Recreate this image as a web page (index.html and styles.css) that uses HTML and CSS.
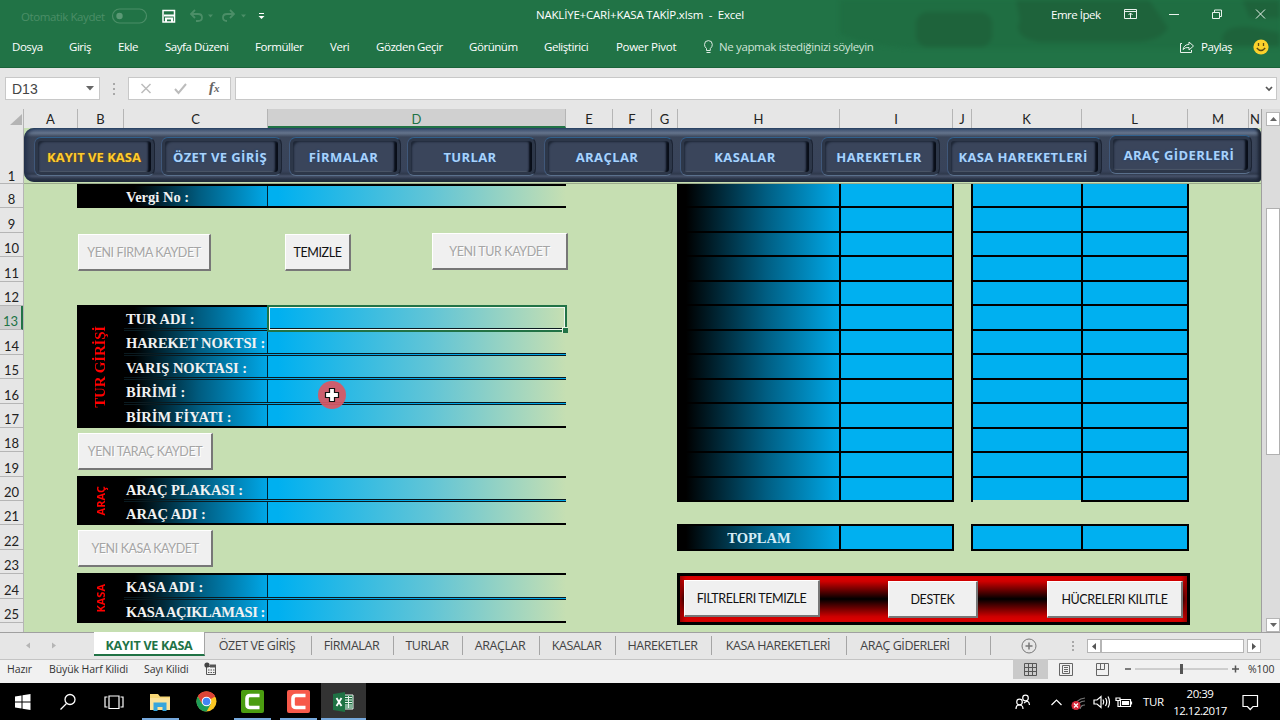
FILE: index.html
```html
<!DOCTYPE html>
<html lang="tr">
<head>
	<meta charset="utf-8">
	<title>NAKLİYE+CARİ+KASA TAKİP.xlsm - Excel</title>
	<link rel="stylesheet" href="styles.css">
</head>
<body>

<!-- Title bar + ribbon tabs -->
<header class="top">
	<svg class="clouds" width="440" height="67" viewBox="840 0 440 67">
		<path d="M836-6h450v54H912Q850 44 836 30Z" fill="#1f6e42"/>
		<rect x="916" y="12" width="76" height="35" rx="12" fill="#1e633b"/>
		<path d="M1015-6H1145L1168 28Q1160 42 1130 42H1040Q1012 38 1020 20Z" fill="#1e633b"/>
		<path d="M1222 38Q1225 25 1250 27L1286 34V46H1235Q1222 46 1222 38ZM1240-6h46v24h-36Z" fill="#1e633b"/>
	</svg>
	<div class="titlebar">
		<span class="autosave">Otomatik Kaydet</span>
		<svg class="quick" width="160" height="30" viewBox="110 0 160 30" fill="none">
			<rect x="112.500" y="9" width="34" height="14" rx="7" stroke="#4b8e67" stroke-width="1.200"/>
			<circle cx="119.500" cy="16" r="3.200" fill="#5b9975"/>
			<path d="M163 10.500h11.500v11.500H163z" stroke="#fff" stroke-width="1.500"/>
			<path d="M164 15.500h10M166 22v-3.500h6V22" stroke="#fff" stroke-width="2"/>
			<path d="M195 10l-4 4 4 4M191 14h7q4 0 4 3.500t-4 3.500h-2" stroke="#4b8e67" stroke-width="1.800"/>
			<path d="M230 10l4 4-4 4M234 14h-7q-4 0-4 3.500t4 3.500" stroke="#4b8e67" stroke-width="1.800"/>
			<path d="M208 14.500h5l-2.500 3zM241 14.500h5l-2.500 3z" fill="#4b8e67"/>
			<path d="M259 13.500h5" stroke="#fff"/><path d="M258.500 16h6l-3 3z" fill="#fff"/>
		</svg>
		<span class="doc-title">NAKLİYE+CARİ+KASA TAKİP.xlsm&nbsp; -&nbsp; Excel</span>
		<span class="user">Emre İpek</span>
		<svg class="winbtns" width="160" height="30" viewBox="1120 0 160 30" fill="none" stroke="#e9f2ec">
			<path d="M1124.500 9.500h12v9h-12zM1124.500 11.500h12M1130.500 18v-5M1128.500 15l2-2 2 2"/>
			<path d="M1169 14.500h10"/>
			<path d="M1212.500 12.500h7v6h-7zM1214.500 12v-2h7v6.500h-2"/>
			<path d="M1256 9.500l9 9M1265 9.500l-9 9"/>
		</svg>
	</div>
	<nav class="ribbon">
		<span class="t-dosya">Dosya</span>
		<span class="t-giris">Giriş</span>
		<span class="t-ekle">Ekle</span>
		<span class="t-sayfa">Sayfa Düzeni</span>
		<span class="t-formul">Formüller</span>
		<span class="t-veri">Veri</span>
		<span class="t-gozden">Gözden Geçir</span>
		<span class="t-gorunum">Görünüm</span>
		<span class="t-gelis">Geliştirici</span>
		<span class="t-pivot">Power Pivot</span>
		<svg width="16" height="18" viewBox="0 0 16 18" fill="none" stroke="#dcebe2"><path d="M3.500 12.500v-2q-2-1.500-2-4a3.800 3.800 0 0 1 7.800 0q0 2.500-2 4v2zM3.500 14.500h4"/></svg>
		<span class="tellme">Ne yapmak istediğinizi söyleyin</span>
		<svg class="share" width="17" height="16" viewBox="0 0 17 16" fill="none" stroke="#e9f2ec"><path d="M3 4.500H1.500v9h11V11M4 10.500q1-5 6-5V3l4.500 4-4.500 4V8.500q-4-.5-6 2z"/></svg>
		<span class="paylas">Paylaş</span>
		<svg width="16" height="16" viewBox="0 0 16 16"><circle cx="8" cy="8" r="7.600" fill="#fbd12c"/><path d="M5.500 4v3M10.500 4v3M3.800 9q4.200 5 8.400 0" stroke="#5d4a12" stroke-width="1.300" fill="none"/></svg>
	</nav>
</header>

<!-- Formula bar -->
<div class="formula">
	<div class="namebox"><span>D13</span><svg width="8" height="5"><path d="M0 0h8L4 4.500z" fill="#666"/></svg></div>
	<svg class="dots" width="4" height="14"><path d="M1 1h2v2H1zM1 6h2v2H1zM1 11h2v2H1z" fill="#a8a8a8"/></svg>
	<div class="fx">
		<svg width="102" height="21" viewBox="129 78 102 21" fill="none" stroke="#bcbcbc" stroke-width="1.500"><path d="M141.500 84l9 9M150.500 84l-9 9"/><path d="M175 89l3.500 4 7.500-9" stroke-width="2"/></svg>
		<span class="fx-f">f<small>x</small></span>
	</div>
	<div class="formula-input"><svg width="8" height="6" fill="none" stroke="#555" stroke-width="1.700"><path d="M1 1l3 3 3-3"/></svg></div>
</div>

<!-- Worksheet -->
<main class="sheet">
	<div class="rowheads">
		<div class="corner"><svg width="12" height="11"><path d="M12 0v11H0z" fill="#b4b4b4"/></svg></div>
		<div class="rh first">1</div>
		<div class="rh">8</div><div class="rh">9</div><div class="rh">10</div><div class="rh">11</div><div class="rh">12</div>
		<div class="rh sel">13</div><div class="rh">14</div><div class="rh">15</div><div class="rh">16</div><div class="rh">17</div>
		<div class="rh">18</div><div class="rh">19</div><div class="rh">20</div><div class="rh">21</div><div class="rh">22</div>
		<div class="rh">23</div><div class="rh">24</div><div class="rh">25</div>
	</div>

	<div class="area">
		<div class="cols colheads">
			<span>A</span><span>B</span><span>C</span><span class="sel">D</span><span>E</span><span>F</span><span>G</span><span>H</span><span>I</span><span>J</span><span>K</span><span>L</span><span>M</span><span>N</span>
		</div>

		<div class="navwrap">
			<div class="navbar">
				<a class="nb n1 on">KAYIT VE KASA</a>
				<a class="nb n2">ÖZET VE GİRİŞ</a>
				<a class="nb n3">FİRMALAR</a>
				<a class="nb n4">TURLAR</a>
				<a class="nb n5">ARAÇLAR</a>
				<a class="nb n6">KASALAR</a>
				<a class="nb n7">HAREKETLER</a>
				<a class="nb n8">KASA HAREKETLERİ</a>
				<a class="nb n9">ARAÇ GİDERLERİ</a>
			</div>
		</div>

		<div class="cols cells">
			<!-- left entry forms -->
			<div class="form f-firma">
				<div class="side"></div>
				<div class="line"><b>Vergi No :</b><i></i></div>
			</div>
			<button class="btn off b-firma">YENI FIRMA KAYDET</button>
			<button class="btn b-temizle">TEMIZLE</button>
			<button class="btn off b-tur">YENI TUR KAYDET</button>

			<div class="form f-tur">
				<div class="side serif"><span>TUR GİRİŞİ</span></div>
				<div class="line"><b>TUR ADI :</b><i class="active"></i></div>
				<div class="line"><b class="tight">HAREKET NOKTSI :</b><i></i></div>
				<div class="line"><b>VARIŞ NOKTASI :</b><i></i></div>
				<div class="line"><b>BİRİMİ :</b><i></i></div>
				<div class="line"><b>BİRİM FİYATI :</b><i></i></div>
			</div>
			<button class="btn off b-tarac">YENI TARAÇ KAYDET</button>

			<div class="form f-arac">
				<div class="side"><span>ARAÇ</span></div>
				<div class="line"><b class="tight">ARAÇ PLAKASI :</b><i></i></div>
				<div class="line"><b>ARAÇ ADI :</b><i></i></div>
			</div>
			<button class="btn off b-kasa">YENI KASA KAYDET</button>

			<div class="form f-kasa">
				<div class="side"><span>KASA</span></div>
				<div class="line"><b>KASA ADI :</b><i></i></div>
				<div class="line"><b class="tighter">KASA AÇIKLAMASI :</b><i></i></div>
			</div>

			<!-- right list -->
			<div class="list l-h"><i></i><i></i><i></i><i></i><i></i><i></i><i></i><i></i><i></i><i></i><i></i><i></i><i></i></div>
			<div class="list l-i"><i></i><i></i><i></i><i></i><i></i><i></i><i></i><i></i><i></i><i></i><i></i><i></i><i></i></div>
			<div class="list l-k"><i></i><i></i><i></i><i></i><i></i><i></i><i></i><i></i><i></i><i></i><i></i><i></i><i></i></div>
			<div class="list l-l"><i></i><i></i><i></i><i></i><i></i><i></i><i></i><i></i><i></i><i></i><i></i><i></i><i></i></div>

			<div class="total t-h">TOPLAM</div>
			<div class="total t-i"></div>
			<div class="total t-k"></div>
			<div class="total t-l"></div>

			<div class="redbox">
				<button class="btn b-filtre">FILTRELERI TEMIZLE</button>
				<button class="btn b-destek">DESTEK</button>
				<button class="btn b-kilit">HÜCRELERI KILITLE</button>
			</div>
		</div>
	</div>

	<div class="vscroll">
		<div class="sb"><svg width="7" height="4"><path d="M0 4h7L3.500 0z" fill="#666"/></svg></div>
		<div class="thumb"></div>
		<div class="sb"><svg width="7" height="4"><path d="M0 0h7L3.500 4z" fill="#666"/></svg></div>
	</div>

	<svg class="pointer" width="30" height="30" viewBox="0 0 30 30"><circle cx="15" cy="15" r="14" fill="#d95763" opacity=".93"/><path d="M12.500 8.500h5v4h4v5h-4v4h-5v-4h-4v-5h4z" fill="#fff" stroke="#111" stroke-width="1.200"/></svg>
</main>

<!-- Sheet tabs -->
<div class="tabs">
	<svg class="arrows" width="94" height="26"><path d="M30 9.500v6l-4-3zM52 9.500v6l4-3z" fill="#b5b5b5"/></svg>
	<span class="s1">KAYIT VE KASA</span>
	<span class="s2">ÖZET VE GİRİŞ</span>
	<span class="s3">FİRMALAR</span>
	<span class="s4">TURLAR</span>
	<span class="s5">ARAÇLAR</span>
	<span class="s6">KASALAR</span>
	<span class="s7">HAREKETLER</span>
	<span class="s8">KASA HAREKETLERİ</span>
	<span class="s9">ARAÇ GİDERLERİ</span>
	<span class="s10"></span>
	<svg class="add" width="16" height="16" fill="none" stroke="#777"><circle cx="8" cy="8" r="7"/><path d="M8 4.500v7M4.500 8h7" stroke-width="1.500"/></svg>
	<svg class="dots" width="4" height="12"><path d="M1 1h2v2H1zM1 5h2v2H1zM1 9h2v2H1z" fill="#a8a8a8"/></svg>
	<div class="hscroll">
		<div class="sb"><svg width="4" height="7"><path d="M4 0v7L0 3.500z" fill="#555"/></svg></div>
		<div class="hthumb"></div>
		<div class="sb right"><svg width="4" height="7"><path d="M0 0v7l4-3.500z" fill="#555"/></svg></div>
	</div>
</div>

<!-- Status bar -->
<div class="status">
	<span class="st1">Hazır</span>
	<span class="st2">Büyük Harf Kilidi</span>
	<span class="st3">Sayı Kilidi</span>
	<svg width="14" height="14" viewBox="0 0 14 14"><path d="M2.500 4.500h9v8h-9z" fill="none" stroke="#555"/><path d="M6 2.500h6v3H6z" fill="#555"/><path d="M4 8h1.500M6.500 8H8M9 8h1.500M4 10.500h1.500M6.500 10.500H8M9 10.500h1.500" stroke="#555"/><circle cx="3" cy="3" r="2.600" fill="#444"/></svg>
	<div class="views">
		<div class="view on"><svg width="13" height="13" fill="none" stroke="#555"><path d="M.5.500h12v12H.5zM4.500.500v12M8.500.500v12M.5 4.500h12M.5 8.500h12"/></svg></div>
		<div class="view"><svg width="14" height="13" fill="none" stroke="#666"><path d="M.5.500h13v12H.5zM3.500 2.500h7v8h-7zM5 4.500h4M5 6.500h4M5 8.500h4"/></svg></div>
		<div class="view"><svg width="13" height="13" fill="none" stroke="#666"><path d="M.5.500h12v12H.5zM4.500.500v6M8.500.500v6M.5 6.500h8"/></svg></div>
	</div>
	<svg class="zoombar" width="120" height="14" viewBox="1122 0 120 14"><path d="M1135 7h93" stroke="#aaa"/><path d="M1125 7h6M1232 7h7M1235.500 3.500v7" stroke="#555" stroke-width="1.500"/><path d="M1180 2h3v10h-3z" fill="#555"/></svg>
	<span class="pct">%100</span>
</div>

<!-- Taskbar -->
<footer class="taskbar">
	<div class="tb"><svg width="16" height="16" fill="#fff"><path d="M0 2.500l6.500-1v6H0zM7.500 1.300L15.500 0v7.500h-8zM0 8.500h6.500v6L0 13.600zM7.500 8.500h8V16l-8-1.200z"/></svg></div>
	<div class="tb"><svg width="18" height="18" fill="none" stroke="#fff" stroke-width="1.300"><circle cx="11" cy="6.500" r="5"/><path d="M7.500 10.500L1.500 16.500"/></svg></div>
	<div class="tb"><svg width="20" height="16" fill="none" stroke="#fff" stroke-width="1.200"><path d="M5 2h10v12.500H5zM3.500 3H1v10h2.500M16.500 3H19v10h-2.500"/></svg></div>
	<div class="tb open"><svg width="20" height="18"><path d="M0 1h8l2 2.500h10V17H0z" fill="#f8d775"/><path d="M0 5h20v12H0z" fill="#fbe29a"/><path d="M3.500 18V9.500h13V18h-4v-4h-5v4z" fill="#37a5dc"/></svg></div>
	<div class="tb"><svg width="21" height="21" viewBox="-10.500 -10.500 21 21"><circle r="10" fill="#fbc723"/><path d="M0 0L-8.700-5A10 10 0 0 1 8.700-5z" fill="#dc4437"/><path d="M0-5h8.700A10 10 0 0 0-8.700-5L-4.300 2.500z" fill="#dc4437"/><path d="M-8.700-5A10 10 0 0 0 0 10L4.300 2.500-4.300 2.500z" fill="#1d9d58"/><circle r="4.800" fill="#fff"/><circle r="3.800" fill="#4285f4"/></svg></div>
	<div class="tb open"><svg width="23" height="23"><rect width="23" height="23" rx="2" fill="#4b9d10"/><path d="M18.500 5.500H9q-3 0-3 3v6q0 3 3 3h9.500" fill="none" stroke="#fff" stroke-width="3.600"/></svg></div>
	<div class="tb open"><svg width="23" height="23"><rect width="23" height="23" rx="2" fill="#f7594a"/><path d="M18.500 5.500H9q-3 0-3 3v6q0 3 3 3h9.500" fill="none" stroke="#fff" stroke-width="3.600"/></svg></div>
	<div class="tb open cur"><svg width="21" height="20"><path d="M11 3h9v14h-9z" fill="#1f7244" stroke="#e8f3ec"/><path d="M12 5.500h7M12 8h7M12 10.500h7M12 13h7M12 15h7M15.500 4v12" stroke="#e8f3ec"/><path d="M0 2l12-2v20L0 18z" fill="#1f7244"/><path d="M3.500 6l5 8M8.500 6l-5 8" stroke="#fff" stroke-width="1.800"/></svg></div>
	<svg class="tray" width="130" height="28" viewBox="1012 687 130 28" fill="none" stroke="#fff" stroke-width="1.200">
		<circle cx="1026.500" cy="697" r="2.800"/><circle cx="1020.500" cy="701" r="2.800"/><path d="M1017 708q0-4 3.500-4t3.500 4M1025 702q5-4 5.500 2"/>
		<path d="M1052.500 704l5-5 5 5"/>
		<path d="M1074 708a13 13 0 0 1 12-11M1077 708a9 9 0 0 1 9-8M1081 708a5 5 0 0 1 5-4" stroke="#777"/>
		<circle cx="1077" cy="704.500" r="4.500" fill="#d5283a" stroke="none"/><path d="M1075 702.500l4 4M1079 702.500l-4 4"/>
		<path d="M1095 699h3l4-3.500v11l-4-3.500h-3zM1104 698.500q1.500 2.500 0 5M1106.500 697q2.500 4 0 8M1109 695.500q3 5.500 0 11"/>
		<path d="M1121.500 698.500h10v7h-10z"/><path d="M1123 700h7v4h-7z" fill="#fff" stroke="none"/><path d="M1132.500 700.500v3M1117 697h4v2.500h-4zM1119 700v5.500h2"/>
	</svg>
	<span class="lang">TUR</span>
	<div class="clock"><span>20:39</span><span class="date">12.12.2017</span></div>
	<svg class="note" width="17" height="17" fill="none" stroke="#fff" stroke-width="1.200"><path d="M1 1.500h14.500v11H11l-2.800 3-2.700-3H1z"/></svg>
</footer>
</body>
</html>
```
FILE: styles.css
```css
*, *::before, *::after {
	box-sizing: border-box;
}
body {
	margin: 0;
	width: 1280px;
	height: 720px;
	overflow: hidden;
	display: flex;
	flex-direction: column;
	background: #e6e6e6;
	font-family: "Open Sans", "Noto Sans", sans-serif;
	font-size: 12px;
	color: #222;
	white-space: nowrap;
}
svg {
	display: block;
	flex: none;
}
span {
	flex: none;
}

/* ---- title bar and ribbon ---- */
.top {
	position: relative;
	height: 68px;
	overflow: hidden;
	background: #217346;
	border-bottom: 1px solid #1a6339;
	color: #fff;
}
.clouds {
	position: absolute;
	right: 0;
	top: 0;
	filter: blur(2px);
}
.titlebar {
	position: relative;
	display: flex;
	align-items: center;
	height: 30px;
	font-size: 11.5px;
	letter-spacing: -0.2px;
}
.titlebar span {
	padding-bottom: 2px;
}
.titlebar .autosave {
	width: 89px;
	margin-left: 21px;
	padding: 3px 0 0;
	color: #4b8e67;
	letter-spacing: -0.4px;
}
.doc-title {
	width: 515px;
	margin-left: 266px;
}
.user {
	width: 69px;
	letter-spacing: -0.5px;
}
.ribbon {
	position: relative;
	display: flex;
	align-items: center;
	height: 33px;
	padding-left: 12px;
	font-size: 11.5px;
	letter-spacing: -0.45px;
}
.t-dosya { width: 57px; }
.t-giris { width: 49px; }
.t-ekle { width: 47px; }
.t-sayfa { width: 90px; }
.t-formul { width: 75px; }
.t-veri { width: 46px; }
.t-gozden { width: 93px; }
.t-gorunum { width: 75px; }
.t-gelis { width: 72px; }
.t-pivot { width: 87px; letter-spacing: -0.3px; }
.tellme {
	width: 460px;
	color: #cfe3d7;
	letter-spacing: -0.37px;
}
.share {
	margin-right: 5px;
}
.paylas {
	width: 52px;
}

/* ---- formula bar ---- */
.formula {
	display: flex;
	height: 41px;
	padding-top: 9px;
}
.namebox {
	display: flex;
	align-items: center;
	justify-content: space-between;
	width: 95px;
	height: 23px;
	margin-left: 5px;
	padding: 0 5px 0 6px;
	background: #fff;
	border: 1px solid #c8c8c8;
	font-family: "Liberation Sans", sans-serif;
	font-size: 14px;
	color: #444;
}
.formula .dots {
	margin: 5px 12px 0 12px;
}
.fx {
	position: relative;
	width: 103px;
	height: 23px;
	background: #fff;
	border: 1px solid #c8c8c8;
}
.fx-f {
	position: absolute;
	left: 80px;
	top: 1px;
	font: italic bold 15px "Liberation Serif", serif;
	color: #666;
}
.fx-f small {
	font-size: 11px;
}
.formula-input {
	display: flex;
	align-items: center;
	justify-content: flex-end;
	width: 1042px;
	height: 23px;
	margin-left: 4px;
	padding-right: 3px;
	background: #fff;
	border: 1px solid #c8c8c8;
}

/* ---- sheet ---- */
.sheet {
	position: relative;
	display: flex;
	height: 523px;
	overflow: hidden;
}
.rowheads {
	width: 24px;
	flex: none;
	background: #e6e6e6;
	border-right: 1px solid #b5b5b5;
	font-family: Lato, sans-serif;
	font-size: 13px;
	color: #222;
}
.corner {
	height: 19px;
	padding: 5px 0 0 10px;
}
.rh {
	display: flex;
	align-items: flex-end;
	justify-content: center;
	height: 24.4px;
	line-height: 15px;
	border-bottom: 1px solid #b5b5b5;
}
.rh.first {
	height: 56px;
	line-height: 14px;
}
.rh.sel {
	background: #d0d0d0;
	color: #217346;
	border-right: 2px solid #217346;
}
.area {
	width: 1237px;
	flex: none;
	background: #c6dfb2;
}
.cols {
	display: grid;
	grid-template-columns: 54px 46px 144px 298px 47px 39px 26px 162px 113px 19px 110px 106px 61px 12px;
}
.colheads {
	height: 19px;
	background: #e6e6e6;
	font-family: Lato, sans-serif;
	font-size: 13px;
	line-height: 21px;
	text-align: center;
}
.colheads span {
	border-right: 1px solid #b5b5b5;
	overflow: hidden;
}
.colheads span:last-child {
	border-right: 0;
}
.colheads .sel {
	background: #d0d0d0;
	color: #217346;
	border-bottom: 2px solid #217346;
}

/* button bar frozen in row 1 */
.navwrap {
	height: 56px;
	border-bottom: 1px solid #9aab8c;
}
.navbar {
	display: flex;
	height: 54px;
	padding: 9px 0 0 10px;
	background: linear-gradient(#2f4f78 0, #53637d 3px, #64748c 5px, #3a4559 9px, #38435a 43px, #2f394c 46px, #47526a 48px, #2b3547 51px, #1f2837);
	border-radius: 10px 6px 4px 10px;
	box-shadow: inset 4px 0 4px -1px #22304a, inset -4px 0 3px -1px #1c2433;
}
.nb {
	height: 39px;
	padding: 1px 3px 0 0;
	border: 1px solid;
	border-color: #30608c #1c2434 #5a708c #40587a;
	border-radius: 7px;
	background: #3a455b;
	box-shadow: inset 0 0 0 3px #2d3749, inset 4px 4px 2px #1f2838, inset -5px 0 2px 1px #080d18, inset 0 -4px 1px #4c5668;
	font-weight: bold;
	font-size: 13px;
	line-height: 36px;
	letter-spacing: 0.4px;
	text-align: center;
	color: #a9d2fb;
	text-shadow: 0 0 2px #1b4a80;
	flex: none;
}
.nb.on {
	color: #ffcb2e;
	text-shadow: 0 0 2px #7a5300;
}
.n1 { width: 121px; letter-spacing: 0; padding-right: 1px; }
.n2 { width: 121px; margin-left: 6px; }
.n3 { width: 112px; margin-left: 7px; }
.n4 { width: 129px; margin-left: 6px; }
.n5 { width: 129px; margin-left: 8px; }
.n6 { width: 133px; margin-left: 7px; }
.n7 { width: 119px; margin-left: 8px; }
.n8 { width: 155px; margin-left: 7px; }
.n9 { width: 143px; margin-left: 7px; margin-top: -2px; }

/* cell area, row 8 and down */
.cells {
	grid-template-rows: repeat(18, 24.4px);
}
.form {
	grid-column: 2 / 5;
	display: grid;
	grid-template-columns: 47px 1fr;
	grid-template-rows: 24.4px minmax(0, 1fr);
	border-top: 2px solid #000;
	border-bottom: 2px solid #000;
	margin-top: -1px;
	margin-left: -1px;
}
.side {
	grid-row: 1 / 3;
	display: flex;
	align-items: center;
	justify-content: center;
	background: #000;
	color: #f00;
	font-weight: bold;
	font-size: 11px;
}
.side span {
	writing-mode: vertical-rl;
	transform: rotate(180deg);
}
.side.serif {
	grid-row: 1 / 6;
	font-family: "Liberation Serif", serif;
	font-size: 15px;
	letter-spacing: -0.2px;
}
.line {
	grid-column: 2;
	display: grid;
	grid-template-columns: 144px 298px;
	grid-template-rows: minmax(0, 1fr);
	min-height: 0;
	border-bottom: 3px double #0a1a20;
	background: linear-gradient(90deg, #000 0, #000 10px, #005c80 75px, #00a8e8 144px);
}
.line:last-child {
	border-bottom: 0;
}
.line b {
	padding-left: 2px;
	border-right: 1px solid #023;
	font-family: "Liberation Serif", serif;
	font-size: 14.5px;
	line-height: 24px;
	color: #f2f2f2;
}
.line b.tight {
	letter-spacing: -0.1px;
}
.line b.tighter {
	letter-spacing: -0.45px;
}
.line i {
	background: linear-gradient(90deg, #00b0f0 0, #00b0f0 10px, #62c5d6 55%, #c6dfb2);
}
.line i.active {
	position: relative;
}
.active::before {
	content: "";
	position: absolute;
	left: -1px;
	top: -2px;
	width: 300px;
	height: 27px;
	border: 2px solid #217346;
	box-shadow: inset 0 0 0 1px #eef7ee;
}
.active::after {
	content: "";
	position: absolute;
	right: -2px;
	bottom: -5px;
	width: 6px;
	height: 6px;
	background: #217346;
	border: 1px solid #e8f3e0;
	border-width: 1px 0 0 1px;
}
.f-firma {
	grid-row: 1;
	grid-template-rows: minmax(0, 1fr);
	margin-top: 0;
}
.f-firma .side {
	grid-row: 1;
}
.f-firma b {
	line-height: 22px;
}
.f-tur {
	grid-row: 6 / 11;
	grid-template-rows: repeat(4, 24.4px) minmax(0, 1fr);
}
.f-arac { grid-row: 13 / 15; }
.f-kasa { grid-row: 17 / 19; }

.btn {
	height: 37px;
	padding: 1px 0 0;
	border: 1px solid #fff;
	border-right: 2px solid #777;
	border-bottom: 2px solid #777;
	background: #f0f0f0;
	font-family: Lato, sans-serif;
	font-size: 12.5px;
	letter-spacing: -0.4px;
	color: #111;
	align-self: start;
	white-space: nowrap;
}
.btn.off {
	color: #a5a5a5;
	text-shadow: 1px 1px 0 #fff;
}
.b-firma { grid-area: 3 / 2 / 5 / 4; width: 133px; margin-top: 1px; }
.b-temizle { grid-area: 3 / 4 / 5 / 5; width: 66px; margin: 1px 0 0 17px; }
.b-tur { grid-area: 3 / 4 / 5 / 5; width: 136px; margin: 0 0 0 164px; }
.b-tarac { grid-area: 11 / 2 / 13 / 4; width: 135px; margin-top: 5px; }
.b-kasa { grid-area: 15 / 2 / 17 / 4; width: 135px; margin-top: 5px; }

.list {
	grid-row: 1 / 14;
	display: flex;
	flex-direction: column;
	margin: 0 -1px -1px -1px;
	border-left: 2px solid #000;
	border-right: 2px solid #000;
	background: #00b0f0;
}
.list i {
	flex: 1;
	border-bottom: 2px solid #000;
}
.l-h {
	grid-column: 8;
	background: linear-gradient(90deg, #000 0, #000 7px, #005f84 55%, #00a9e8);
}
.l-i { grid-column: 9; }
.l-k { grid-column: 11; }
.l-k i:last-child { border-bottom-color: #c6dfb2; }
.l-l { grid-column: 12; }

.total {
	grid-row: 15;
	margin: -1px -1px -1px -1px;
	border: 2px solid #000;
	background: #00b0f0;
	font: bold 14.5px/24px "Liberation Serif", serif;
	text-align: center;
	color: #d5ecf6;
}
.t-h {
	grid-column: 8;
	background: linear-gradient(90deg, #000 0, #000 7px, #005f84 50%, #00a9e8);
}
.t-i { grid-column: 9; }
.t-k { grid-column: 11; }
.t-l { grid-column: 12; }

.redbox {
	grid-area: 17 / 8 / 19 / 13;
	display: flex;
	height: 52px;
	margin: -1px -2px 0 -1px;
	padding: 4px 0 0 4px;
	border: 3px solid #000;
	background: linear-gradient(#e60000 0, #c00 12%, #000 50%, #c00 88%, #e60000);
	box-shadow: inset 5px 0 4px -2px #900, inset -5px 0 4px -2px #900;
}
.b-filtre { width: 136px; }
.b-destek { width: 90px; margin: 1px 0 0 68px; }
.b-kilit { width: 136px; margin: 1px 0 0 69px; }

/* scrollbars */
.vscroll {
	flex: 1;
	padding: 3px 1px 0 4px;
	background: #dcdcdc;
	border-left: 1px solid #9f9f9f;
	display: flex;
	flex-direction: column;
}
.sb {
	display: flex;
	align-items: center;
	justify-content: center;
	width: 14px;
	height: 14px;
	flex: none;
	background: #fff;
	border: 1px solid #b5b5b5;
}
.thumb {
	width: 14px;
	height: 247px;
	margin: 82px 0 163px;
	background: #fff;
	border: 1px solid #b0b0b0;
}
.pointer {
	position: absolute;
	left: 317px;
	top: 271px;
}

/* ---- sheet tabs ---- */
.tabs {
	display: flex;
	height: 28px;
	border-top: 1px solid #a0a0a0;
	border-bottom: 1px solid #c4c4c4;
	background: #e6e6e6;
	font-size: 12.5px;
	line-height: 26px;
	letter-spacing: -0.45px;
	text-align: center;
	color: #444;
}
.tabs span {
	height: 19px;
	margin-top: 3px;
	padding-right: 2px;
	line-height: 20px;
	border-right: 1px solid #a5a5a5;
}
.tabs .s1 {
	width: 111px;
	height: 24px;
	margin-top: -1px;
	padding-right: 0;
	line-height: 27px;
	background: #fff;
	border-right: 1px solid #a5a5a5;
	border-bottom: 2px solid #217346;
	font-weight: bold;
	letter-spacing: -0.25px;
	color: #217346;
}
.s2 { width: 107px; }
.s3 { width: 82px; }
.s4 { width: 69px; }
.s5 { width: 77px; }
.s6 { width: 76px; }
.s7 { width: 96px; }
.s8 { width: 135px; }
.s9 { width: 119px; }
.s10 { width: 25px; }
.add {
	margin: 5px 0 0 30px;
}
.tabs .dots {
	margin: 7px 0 0 34px;
}
.hscroll {
	display: flex;
	margin: 6px 0 0 12px;
}
.hthumb {
	width: 143px;
	height: 14px;
	background: #fff;
	border: 1px solid #b5b5b5;
}
.sb.right {
	margin-left: 3px;
}

/* ---- status bar ---- */
.status {
	display: flex;
	align-items: center;
	height: 23px;
	padding-bottom: 5px;
	background: #f1f1f1;
	font-size: 10.5px;
	letter-spacing: -0.1px;
	color: #333;
}
.st1 { width: 42px; margin-left: 7px; }
.st2 { width: 95px; }
.st3 { width: 60px; }
.views {
	display: flex;
	margin-left: 795px;
}
.view {
	display: flex;
	align-items: center;
	justify-content: center;
	width: 36px;
	height: 20px;
}
.view.on {
	width: 35px;
	background: #cacaca;
}
.zoombar {
	margin-left: 2px;
}
.pct {
	margin-left: 6px;
}

/* ---- taskbar ---- */
.taskbar {
	display: flex;
	align-items: center;
	height: 37px;
	background: #000;
	color: #fff;
}
.tb {
	display: flex;
	align-items: center;
	justify-content: center;
	width: 46px;
	height: 37px;
	flex: none;
}
.tb:first-child {
	width: 45px;
}
.tb.open {
	background: linear-gradient(#76a9dd, #76a9dd) center bottom / 37px 2px no-repeat;
}
.tb.cur {
	width: 45px;
	background: linear-gradient(#76a9dd, #76a9dd) center bottom / 45px 2px no-repeat #333;
}
.tray {
	margin-left: 645px;
}
.lang {
	margin-left: 2px;
	width: 31px;
	font-size: 11.5px;
	letter-spacing: -0.3px;
}
.clock {
	width: 52px;
	display: flex;
	flex-direction: column;
	align-items: center;
	font-size: 11.5px;
	line-height: 17px;
	letter-spacing: -0.5px;
}
.note {
	margin: 2px 0 0 16px;
}
```
